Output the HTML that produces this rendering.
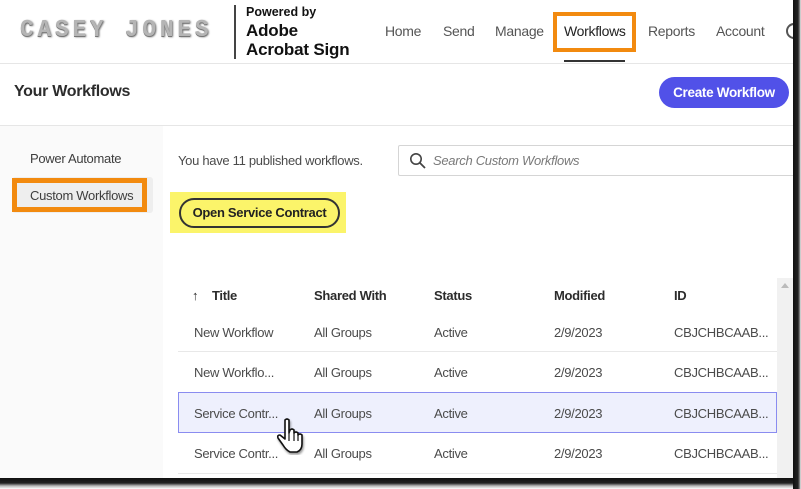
<!DOCTYPE html>
<html><head><meta charset="utf-8"><style>
*{margin:0;padding:0;box-sizing:border-box}
body{width:801px;height:489px;background:#fff;font-family:"Liberation Sans",sans-serif;position:relative;overflow:hidden;color:#2c2c2c}
.a{position:absolute;white-space:nowrap}
.n{font-size:14px;color:#555;top:23px;letter-spacing:-0.3px}
.t{font-size:13px;color:#4b4b4b;letter-spacing:-0.3px}
.h{font-size:13px;font-weight:bold;color:#2c2c2c;letter-spacing:-0.3px}
</style></head><body>
<div class="a" style="left:0;top:478px;width:801px;height:11px;background:linear-gradient(#111 0,#222 5px,#bbb 8px,#fff 11px)"></div>
<div class="a" style="left:793px;top:0;width:8px;height:489px;background:linear-gradient(90deg,#111 0,#222 5px,#999 7px,#fff 8px)"></div>
<div class="a" style="left:0;top:0;width:793px;height:478px;background:#fff;overflow:hidden">
<div class="a" style="left:20px;top:17px;font-size:24px;font-weight:bold;letter-spacing:4px;color:#b5b5b5;text-shadow:0 1px 0 #777,1px 1px 2px #666;font-family:'Liberation Mono',monospace;transform:scaleX(0.95);transform-origin:left">CASEY&nbsp;JONES</div>
<div class="a" style="left:234px;top:5px;width:2px;height:54px;background:#444"></div>
<div class="a" style="left:246px;top:5px;font-size:12.5px;font-weight:bold;color:#111">Powered by</div>
<div class="a" style="left:246px;top:21px;font-size:17px;font-weight:bold;color:#111;line-height:19px;letter-spacing:-0.2px">Adobe<br>Acrobat Sign</div>
<div class="a n" style="left:385px">Home</div>
<div class="a n" style="left:443px">Send</div>
<div class="a n" style="left:495px">Manage</div>
<div class="a" style="left:553px;top:12px;width:83px;height:40px;border:4px solid #f28a0f"></div>
<div class="a n" style="left:564px;color:#222">Workflows</div>
<div class="a" style="left:564px;top:60px;width:61px;height:2px;background:#333"></div>
<div class="a n" style="left:648px">Reports</div>
<div class="a n" style="left:716px">Account</div>
<div class="a" style="left:786px;top:23px;width:16px;height:16px;border:2px solid #555;border-radius:50%"></div>
<div class="a" style="left:0;top:63px;width:793px;height:1px;background:#e6e6e6"></div>
<div class="a" style="left:14px;top:83px;font-size:16px;font-weight:bold;color:#2c2c2c;letter-spacing:-0.3px">Your Workflows</div>
<div class="a" style="left:659px;top:77px;width:130px;height:31px;border-radius:16px;background:#5151e8;color:#fff;font-size:13.5px;font-weight:bold;text-align:center;line-height:31px;letter-spacing:-0.3px">Create Workflow</div>
<div class="a" style="left:0;top:125px;width:793px;height:1px;background:#e6e6e6"></div>
<div class="a" style="left:0;top:126px;width:163px;height:352px;background:#fafafa"></div>
<div class="a t" style="left:30px;top:151px;color:#3e3e3e">Power Automate</div>
<div class="a" style="left:12px;top:177px;width:141px;height:36px;background:#eee;border-radius:3px"></div>
<div class="a" style="left:12px;top:178px;width:135px;height:34px;border:5px solid #f28a0f"></div>
<div class="a t" style="left:30px;top:188px;color:#3e3e3e">Custom Workflows</div>
<div class="a t" style="left:178px;top:153px">You have 11 published workflows.</div>
<div class="a" style="left:398px;top:145px;width:400px;height:31px;border:1px solid #d5d5d5;border-radius:2px"></div>
<svg class="a" style="left:409px;top:152px" width="18" height="18" viewBox="0 0 18 18"><circle cx="7" cy="7" r="5.2" fill="none" stroke="#444" stroke-width="1.6"/><path d="M11 11 L16 16" stroke="#444" stroke-width="1.8"/></svg>
<div class="a t" style="left:433px;top:153px;font-style:italic;color:#7a7a7a">Search Custom Workflows</div>
<div class="a" style="left:170px;top:192px;width:176px;height:41px;background:#fbf46a"></div>
<div class="a" style="left:179px;top:198px;width:161px;height:30px;border:2px solid #333;border-radius:15px;text-align:center;line-height:26px;font-size:13px;font-weight:bold;color:#222;letter-spacing:-0.3px">Open Service Contract</div>
<div class="a" style="left:777px;top:278px;width:16px;height:200px;background:#f1f1f1"></div>
<div class="a" style="left:781px;top:283px;width:0;height:0;border-left:4px solid transparent;border-right:4px solid transparent;border-bottom:5px solid #bbb"></div>
<div class="a h" style="left:192px;top:288px;font-weight:normal">↑</div>
<div class="a h" style="left:212px;top:288px">Title</div>
<div class="a h" style="left:314px;top:288px">Shared With</div>
<div class="a h" style="left:434px;top:288px">Status</div>
<div class="a h" style="left:554px;top:288px">Modified</div>
<div class="a h" style="left:674px;top:288px">ID</div>
<div class="a" style="left:178px;top:351px;width:599px;height:1px;background:#e8e8e8"></div>
<div class="a" style="left:178px;top:473px;width:599px;height:1px;background:#e8e8e8"></div>
<div class="a" style="left:178px;top:392px;width:599px;height:41px;background:#eef0fd;border:1px solid #8a8cf0"></div>
<div class="a t" style="left:194px;top:325px">New Workflow</div>
<div class="a t" style="left:194px;top:365px">New Workflo...</div>
<div class="a t" style="left:194px;top:406px">Service Contr...</div>
<div class="a t" style="left:194px;top:446px">Service Contr...</div>
<div class="a t" style="left:314px;top:325px">All Groups</div><div class="a t" style="left:314px;top:365px">All Groups</div><div class="a t" style="left:314px;top:406px">All Groups</div><div class="a t" style="left:314px;top:446px">All Groups</div>
<div class="a t" style="left:434px;top:325px">Active</div><div class="a t" style="left:434px;top:365px">Active</div><div class="a t" style="left:434px;top:406px">Active</div><div class="a t" style="left:434px;top:446px">Active</div>
<div class="a t" style="left:554px;top:325px">2/9/2023</div><div class="a t" style="left:554px;top:365px">2/9/2023</div><div class="a t" style="left:554px;top:406px">2/9/2023</div><div class="a t" style="left:554px;top:446px">2/9/2023</div>
<div class="a t" style="left:674px;top:325px">CBJCHBCAAB...</div><div class="a t" style="left:674px;top:365px">CBJCHBCAAB...</div><div class="a t" style="left:674px;top:406px">CBJCHBCAAB...</div><div class="a t" style="left:674px;top:446px">CBJCHBCAAB...</div>
<svg class="a" style="left:275px;top:417px" width="32" height="38" viewBox="0 0 32 38"><path d="M10 3 Q12 1 14 3 L14 16 L15 13 Q17 11 19 13 L19 16 Q21 14 23 16 L23 18 Q25 16 27 18 L27 27 Q27 33 22 35 L15 35 Q11 33 8 28 L3 21 Q2 18 5 18 L10 22 Z" fill="#fff" stroke="#111" stroke-width="1.6" stroke-linejoin="round" style="filter:drop-shadow(1px 2px 1px rgba(0,0,0,.4))"/><path d="M14 16 L14 24 M19 16 L19 24 M23 18 L23 24" stroke="#111" stroke-width="1.2"/></svg>
</div>
</body></html>
